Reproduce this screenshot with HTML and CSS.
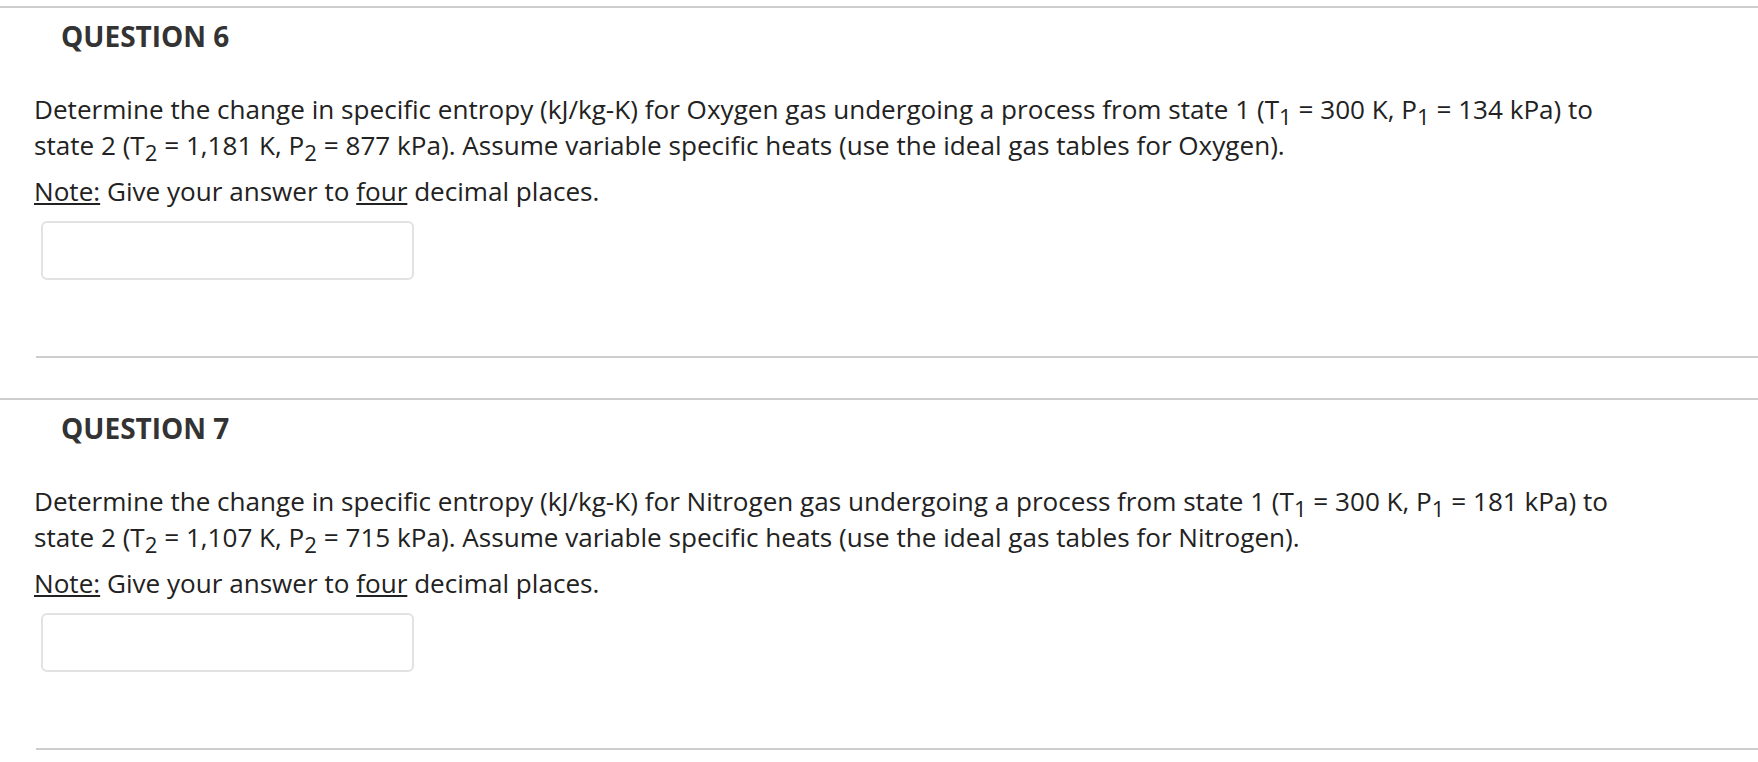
FILE: index.html
```html
<!DOCTYPE html>
<html lang="en">
<head>
<meta charset="utf-8">
<title>Questions</title>
<link rel="stylesheet" href="styles.css">
</head>
<body>
<div class="page">
  <section class="question">
    <h2 class="q-title">QUESTION 6</h2>
    <div class="q-body">
      <p class="q-text">Determine the change in specific entropy (kJ/kg-K) for Oxygen gas undergoing a process from state 1 (T<sub>1</sub> = 300 K, P<sub>1</sub> = 134 kPa) to state 2 (T<sub>2</sub> = 1,181 K, P<sub>2</sub> = 877 kPa). Assume variable specific heats (use the ideal gas tables for Oxygen).</p>
      <p class="q-note"><u>Note:</u> Give your answer to <u>four</u> decimal places.</p>
      <input class="answer" type="text" aria-label="Answer for question 6">
    </div>
    <div class="q-divider"></div>
  </section>
  <section class="question">
    <h2 class="q-title">QUESTION 7</h2>
    <div class="q-body">
      <p class="q-text">Determine the change in specific entropy (kJ/kg-K) for Nitrogen gas undergoing a process from state 1 (T<sub>1</sub> = 300 K, P<sub>1</sub> = 181 kPa) to state 2 (T<sub>2</sub> = 1,107 K, P<sub>2</sub> = 715 kPa). Assume variable specific heats (use the ideal gas tables for Nitrogen).</p>
      <p class="q-note"><u>Note:</u> Give your answer to <u>four</u> decimal places.</p>
      <input class="answer" type="text" aria-label="Answer for question 7">
    </div>
    <div class="q-divider"></div>
  </section>
</div>
</body>
</html>
```
FILE: styles.css
```css
html, body {
  margin: 0;
  padding: 0;
  background: #ffffff;
}
body {
  font-family: "Open Sans", "Noto Sans", "Liberation Sans", sans-serif;
  color: #222222;
}
.page {
  padding-top: 6px;
}
.question {
  border-top: 2px solid #cdcdcd;
}
.question + .question {
  margin-top: 40px;
}
.q-title {
  margin: 9px 0 0 61px;
  font-size: 28px;
  line-height: 38px;
  font-weight: 700;
  color: #333333;
}
.q-body {
  padding-left: 34px;
  padding-right: 118px;
}
.q-text {
  margin: 36px 0 0 0;
  font-size: 26.1px;
  line-height: 36px;
}
.q-note {
  margin: 10px 0 0 0;
  font-size: 26.1px;
  line-height: 36px;
}
sub {
  font-size: 0.85em;
  vertical-align: -0.28em;
  line-height: 0;
}
.answer {
  display: block;
  box-sizing: border-box;
  margin: 12px 0 0 7px;
  width: 373px;
  height: 59px;
  border: 2px solid #e2e2e2;
  border-radius: 6px;
  background: #ffffff;
  padding: 0 10px;
  font: inherit;
  outline: none;
}
.q-divider {
  margin: 76px 0 0 36px;
  height: 2px;
  background: #cdcdcd;
}
```
